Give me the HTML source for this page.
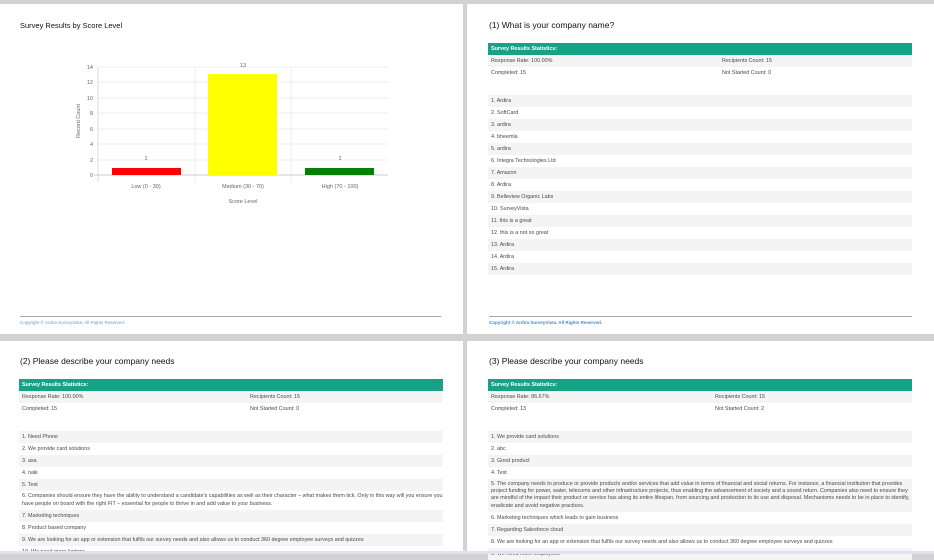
<!DOCTYPE html>
<html><head><style>
*{margin:0;padding:0;box-sizing:border-box}
body{width:934px;height:554px;background:#d2d2d2;position:relative;overflow:hidden;font-family:"Liberation Sans",sans-serif;color:#4a4a4a}
.p{position:absolute;background:#fff}
.t{position:absolute;font-size:8.5px;color:#111}
.tbl{position:absolute;font-size:5.4px;}
.h{background:#17a286;color:#fff;font-weight:bold;height:12px;line-height:12px;padding-left:3px}
.r{height:12px;line-height:12px;padding-left:3px;position:relative}
.g{background:#f4f4f4}
.r span{position:absolute}
.m{line-height:7.5px;padding-top:2px;padding-bottom:2px;height:auto}
.ft{position:absolute;border-top:1px solid #aaa;font-size:4.5px;color:#6a9fd0;padding-top:3px}
</style></head><body>
<div class="p" style="left:0;top:4px;width:463px;height:330px">
 <div class="t" style="left:20px;top:17px;font-size:7.5px">Survey Results by Score Level</div>
 <svg style="position:absolute;left:0;top:-4px" width="463" height="220" font-family="Liberation Sans" font-size="5.5" fill="#666">
  <g stroke="#e6e6e6" stroke-width="0.7">
   <line x1="98" y1="67" x2="388" y2="67"/><line x1="98" y1="82" x2="388" y2="82"/><line x1="98" y1="98" x2="388" y2="98"/><line x1="98" y1="113" x2="388" y2="113"/><line x1="98" y1="129" x2="388" y2="129"/><line x1="98" y1="144" x2="388" y2="144"/><line x1="98" y1="160" x2="388" y2="160"/>
   <line x1="195" y1="67" x2="195" y2="182"/><line x1="291" y1="67" x2="291" y2="182"/>
  </g>
  <line x1="98" y1="67" x2="98" y2="182" stroke="#ccc" stroke-width="0.7"/>
  <line x1="94" y1="175" x2="388" y2="175" stroke="#bbb" stroke-width="0.7"/>
  <rect x="112" y="168" width="69" height="7" fill="#f00"/>
  <rect x="208" y="74" width="69" height="101" fill="#ff0"/>
  <rect x="305" y="168" width="69" height="7" fill="#008000"/>
  <g text-anchor="end"><text x="93" y="69">14</text><text x="93" y="84">12</text><text x="93" y="100">10</text><text x="93" y="115">8</text><text x="93" y="131">6</text><text x="93" y="146">4</text><text x="93" y="162">2</text><text x="93" y="177">0</text></g>
  <g text-anchor="middle"><text x="146" y="160">1</text><text x="243" y="67">13</text><text x="340" y="160">1</text>
  <text x="146" y="188">Low (0 - 30)</text><text x="243" y="188">Medium (30 - 70)</text><text x="340" y="188">High (70 - 100)</text>
  <text x="243" y="203">Score Level</text>
  <text transform="translate(80,121) rotate(-90)">Record Count</text></g>
 </svg>
 <div class="ft" style="left:20px;top:312px;width:421px">Copyright © Ardira SurveyVista. All Rights Reserved.</div>
</div>
<div class="p" style="left:467px;top:4px;width:467px;height:330px">
 <div class="t" style="left:22px;top:16px">(1) What is your company name?</div>
 <div class="tbl" style="left:21px;top:39px;width:424px">
  <div class="h">Survey Results Statistics:</div>
  <div class="r g">Response Rate: 100.00%<span style="left:234px">Recipients Count: 15</span></div>
  <div class="r">Completed: 15<span style="left:234px">Not Started Count: 0</span></div>
  <div style="height:16px"></div>
  <div class="r g">1. Ardira</div><div class="r">2. SoftCard</div><div class="r g">3. ardira</div><div class="r">4. bheemla</div><div class="r g">5. ardira</div><div class="r">6. Integra Technologies Ltd</div><div class="r g">7. Amazon</div><div class="r">8. Ardira</div><div class="r g">9. Belleview Organic Labs</div><div class="r">10. SurveyVista</div><div class="r g">11. this is a great</div><div class="r">12. this is a not so great</div><div class="r g">13. Ardira</div><div class="r">14. Ardira</div><div class="r g">15. Ardira</div>
 </div>
 <div class="ft" style="left:22px;top:312px;width:423px;color:#4a8bc9;font-weight:bold">Copyright © Ardira SurveyVista. All Rights Reserved.</div>
</div>
<div class="p" style="left:0;top:341px;width:463px;height:213px">
 <div class="t" style="left:20px;top:15px">(2) Please describe your company needs</div>
 <div class="tbl" style="left:19px;top:38px;width:424px">
  <div class="h">Survey Results Statistics:</div>
  <div class="r g">Response Rate: 100.00%<span style="left:231px">Recipients Count: 15</span></div>
  <div class="r">Completed: 15<span style="left:231px">Not Started Count: 0</span></div>
  <div style="height:16px"></div>
  <div class="r g">1. Need Phone</div><div class="r">2. We provide card solutions</div><div class="r g">3. asa</div><div class="r">4. naik</div><div class="r g">5. Test</div>
  <div class="r m">6. Companies should ensure they have the ability to understand a candidate's capabilities as well as their character – what makes them tick. Only in this way will you ensure you have people on board with the right FIT – essential for people to thrive in and add value to your business.</div>
  <div class="r g">7. Marketing techniques</div><div class="r">8. Product based company</div><div class="r g">9. We are looking for an app or extension that fulfils our survey needs and also allows us to conduct 360 degree employee surveys and quizzes</div><div class="r">10. We need more laptops</div>
 </div>
</div>
<div class="p" style="left:467px;top:341px;width:467px;height:213px">
 <div class="t" style="left:22px;top:15px">(3) Please describe your company needs</div>
 <div class="tbl" style="left:21px;top:38px;width:424px">
  <div class="h">Survey Results Statistics:</div>
  <div class="r g">Response Rate: 86.67%<span style="left:227px">Recipients Count: 15</span></div>
  <div class="r">Completed: 13<span style="left:227px">Not Started Count: 2</span></div>
  <div style="height:16px"></div>
  <div class="r g">1. We provide card solutions</div><div class="r">2. abc</div><div class="r g">3. Good product</div><div class="r">4. Test</div>
  <div class="r m g" style="line-height:7.2px;padding-top:2px;padding-bottom:2px">5. The company needs to produce or provide products and/or services that add value in terms of financial and social returns. For instance, a financial institution that provides project funding for power, water, telecoms and other infrastructure projects, thus enabling the advancement of society and a sound return. Companies also need to ensure they are mindful of the impact their product or service has along its entire lifespan, from sourcing and production to its use and disposal. Mechanisms needs to be in place to identify, eradicate and avoid negative practices.</div>
  <div class="r">6. Marketing techniques which leads to gain business</div><div class="r g">7. Regarding Salesforce cloud</div><div class="r">8. We are looking for an app or extension that fulfils our survey needs and also allows us to conduct 360 degree employee surveys and quizzes</div><div class="r g">9. We need more employees</div>
 </div>
</div>
<div style="position:absolute;left:0;top:551px;width:934px;height:3px;background:#dfe3ea"></div>
</body></html>
